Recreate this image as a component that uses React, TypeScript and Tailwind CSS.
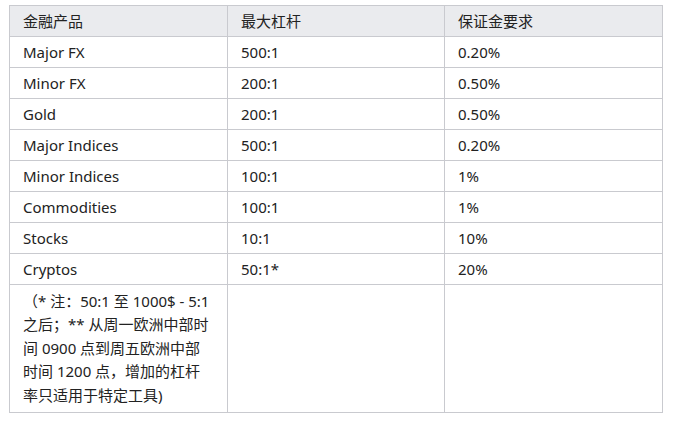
const rows = [
  ["Major FX", "500:1", "0.20%"],
  ["Minor FX", "200:1", "0.50%"],
  ["Gold", "200:1", "0.50%"],
  ["Major Indices", "500:1", "0.20%"],
  ["Minor Indices", "100:1", "1%"],
  ["Commodities", "100:1", "1%"],
  ["Stocks", "10:1", "10%"],
  ["Cryptos", "50:1*", "20%"],
]

export default function App() {
  return (
    <div className="min-h-[427px] bg-white pl-[9px] pt-[5px] font-['Noto_Sans','Noto_Sans_CJK_SC',sans-serif] text-[15px] text-[#222]">
      <table className="w-[654px] table-fixed border-collapse">
        <thead>
          <tr className="h-[31px] bg-[#eaebee]">
            <th className="w-[218px] border border-[#c9cacf] px-[13px] text-left font-normal">金融产品</th>
            <th className="w-[217px] border border-[#c9cacf] px-[13px] text-left font-normal">最大杠杆</th>
            <th className="border border-[#c9cacf] px-[13px] text-left font-normal">保证金要求</th>
          </tr>
        </thead>
        <tbody>
          {rows.map(([a, b, c]) => (
            <tr key={a} className="h-[31px]">
              <td className="border border-[#c9cacf] px-[13px]">{a}</td>
              <td className="border border-[#c9cacf] px-[13px]">{b}</td>
              <td className="border border-[#c9cacf] px-[13px]">{c}</td>
            </tr>
          ))}
          <tr>
            <td className="border border-[#c9cacf] px-[13px] py-[5px] align-top leading-[23.4px]">
              （* 注：50:1 至 1000$ - 5:1 之后；** 从周一欧洲中部时间 0900 点到周五欧洲中部时间 1200 点，增加的杠杆率只适用于特定工具)
            </td>
            <td className="border border-[#c9cacf]"></td>
            <td className="border border-[#c9cacf]"></td>
          </tr>
        </tbody>
      </table>
    </div>
  )
}
